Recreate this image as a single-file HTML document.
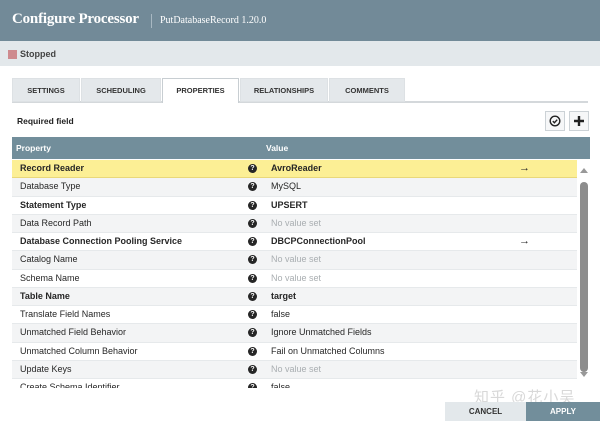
<!DOCTYPE html>
<html><head><meta charset="utf-8"><style>
*{margin:0;padding:0;box-sizing:border-box}
body{width:600px;height:421px;overflow:hidden;background:#fff;font-family:"Liberation Sans",Arial,sans-serif;position:relative;color:#262626}
.hdr{position:absolute;left:0;top:0;width:600px;height:41px;background:#728a98}
.hdr .t{position:absolute;left:12px;top:11px;font-family:"Liberation Serif",serif;font-weight:bold;font-size:15px;color:#fff;letter-spacing:-0.2px}
.hdr .s{position:absolute;left:151px;top:14px;height:14px;border-left:1px solid #a8b8c2;padding-left:8px;font-family:"Liberation Serif",serif;font-size:10px;color:#fff;line-height:14px}
.st{position:absolute;left:0;top:41px;width:600px;height:25px;background:#e3e8eb}
.st .sq{position:absolute;left:8px;top:9px;width:9px;height:9px;background:#ce8a8e}
.st .tx{position:absolute;left:20px;top:8px;font-size:9px;font-weight:bold;color:#444}
.tabs{position:absolute;left:12px;top:78px;height:25px;width:576px;border-bottom:2px solid #d4d8db}
.tab{position:absolute;top:0;height:24px;background:#e4e8eb;font-size:7.5px;font-weight:bold;color:#333;text-align:center;line-height:24px;border:1px solid #dde1e4}
.tab.on{background:#fff;border:1px solid #c8ced2;border-bottom:none;height:25px}
.req{position:absolute;left:17px;top:116px;font-size:8.5px;font-weight:bold;color:#222}
.btn{position:absolute;top:111px;width:20px;height:20px;border:1px solid #ccd2d6;background:#f6f7f8;text-align:center}
.th{position:absolute;left:12px;top:137px;width:578px;height:22px;background:#728e9b;color:#fff;font-size:8.5px;font-weight:bold}
.th span{position:absolute;top:6px}
.body{position:absolute;left:12px;top:160px;width:565px;height:228px;overflow:hidden}
.r{position:relative;height:18.25px;border-bottom:1px solid #e6e9eb;font-size:9px;line-height:17px;background:#fff}
.r.g{background:#f3f4f5}
.r.y{background:#fcef95;border-bottom:1px solid #e9d87a}
.r span{position:absolute;top:0}
.p{left:8px}.v{left:259px}
.q{left:236px;top:4px!important;width:9px;height:9px;border-radius:50%;background:#262626;color:#fff;font-size:7px;line-height:9px;text-align:center;font-weight:bold}
.c1{position:absolute;left:250px;top:0;width:1px;height:100%;background:#e0e3e5}
.c2{position:absolute;left:500px;top:0;width:1px;height:100%;background:#e0e3e5}
.b{font-weight:bold}.n{color:#a9aeb1}
.ar{left:507px;font-weight:bold;font-size:11px}
.sb{position:absolute;left:580px;top:182px;width:8px;height:190px;background:#8d8d8d;border-radius:4px}
.foot{position:absolute;top:402px;height:19px;font-size:8px;font-weight:bold;text-align:center;line-height:20px}
.wm{position:absolute;left:474px;top:386px;font-size:15px;color:#d8d8d8;font-family:"Liberation Sans","Noto Sans CJK SC",sans-serif;letter-spacing:1px}
</style></head><body>
<div class="hdr"><div class="t">Configure Processor</div><div class="s">PutDatabaseRecord 1.20.0</div></div>
<div class="st"><div class="sq"></div><div class="tx">Stopped</div></div>
<div class="tabs">
<div class="tab" style="left:0;width:68px">SETTINGS</div>
<div class="tab" style="left:69px;width:80px">SCHEDULING</div>
<div class="tab on" style="left:150px;width:77px">PROPERTIES</div>
<div class="tab" style="left:228px;width:88px">RELATIONSHIPS</div>
<div class="tab" style="left:317px;width:76px">COMMENTS</div>
</div>
<div class="req">Required field</div>
<div class="btn" style="left:545px"><svg width="12" height="12" viewBox="0 0 12 12" style="margin-top:3px"><circle cx="6" cy="6" r="4.8" fill="none" stroke="#222" stroke-width="1.4"/><path d="M3.8 6.1l1.6 1.6 2.8-3" fill="none" stroke="#222" stroke-width="1.4"/></svg></div>
<div class="btn" style="left:569px"><svg width="12" height="12" viewBox="0 0 12 12" style="margin-top:3px"><path d="M6 1v10M1 6h10" stroke="#222" stroke-width="2.4"/></svg></div>
<div class="th"><span style="left:4px">Property</span><span style="left:254px">Value</span></div>
<div class="body">
<div class="c1"></div><div class="c2"></div>
<div class="r y b"><span class="p">Record Reader</span><span class="q">?</span><span class="v">AvroReader</span><span class="ar">→</span></div>
<div class="r g"><span class="p">Database Type</span><span class="q">?</span><span class="v">MySQL</span></div>
<div class="r b"><span class="p">Statement Type</span><span class="q">?</span><span class="v">UPSERT</span></div>
<div class="r g"><span class="p">Data Record Path</span><span class="q">?</span><span class="v n">No value set</span></div>
<div class="r b"><span class="p">Database Connection Pooling Service</span><span class="q">?</span><span class="v">DBCPConnectionPool</span><span class="ar">→</span></div>
<div class="r g"><span class="p">Catalog Name</span><span class="q">?</span><span class="v n">No value set</span></div>
<div class="r"><span class="p">Schema Name</span><span class="q">?</span><span class="v n">No value set</span></div>
<div class="r g b"><span class="p">Table Name</span><span class="q">?</span><span class="v">target</span></div>
<div class="r"><span class="p">Translate Field Names</span><span class="q">?</span><span class="v">false</span></div>
<div class="r g"><span class="p">Unmatched Field Behavior</span><span class="q">?</span><span class="v">Ignore Unmatched Fields</span></div>
<div class="r"><span class="p">Unmatched Column Behavior</span><span class="q">?</span><span class="v">Fail on Unmatched Columns</span></div>
<div class="r g"><span class="p">Update Keys</span><span class="q">?</span><span class="v n">No value set</span></div>
<div class="r"><span class="p">Create Schema Identifier</span><span class="q">?</span><span class="v">false</span></div>
</div>
<div style="position:absolute;left:580px;top:168px;width:0;height:0;border-left:4px solid transparent;border-right:4px solid transparent;border-bottom:5px solid #999"></div>
<div class="sb"></div>
<div style="position:absolute;left:580px;top:372px;width:0;height:0;border-left:4px solid transparent;border-right:4px solid transparent;border-top:5px solid #999"></div>
<div class="wm">知乎 @花小吴</div>
<div class="foot" style="left:445px;width:81px;background:#e3e8eb;color:#333">CANCEL</div>
<div class="foot" style="left:526px;width:74px;background:#728e9b;color:#fff">APPLY</div>
</body></html>
